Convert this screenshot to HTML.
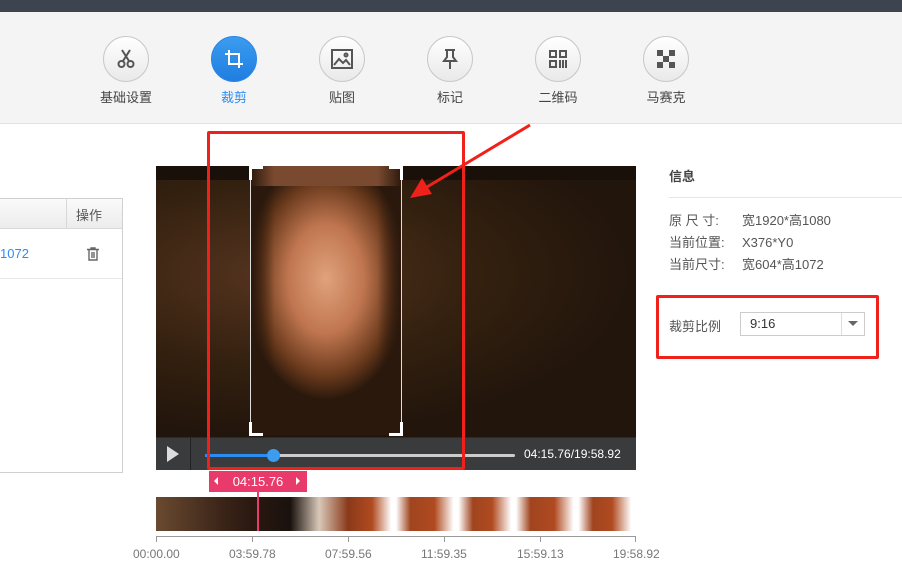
<!DOCTYPE html>
<html><head><meta charset="utf-8"><style>
*{margin:0;padding:0;box-sizing:border-box}
body{width:902px;height:566px;background:#fff;font-family:"Liberation Sans","Noto Sans CJK SC",sans-serif;position:relative;overflow:hidden;font-size:13px;color:#333}
.a{position:absolute}
.top{left:0;top:0;width:902px;height:12px;background:#3e4350}
.bar{left:0;top:12px;width:902px;height:112px;background:#f4f4f4;border-bottom:1px solid #e2e2e2}
.ic{position:absolute;top:36px;width:46px;height:46px;border-radius:50%;background:linear-gradient(#fff,#e9e9e9);border:1px solid #c9c9c9;display:flex;align-items:center;justify-content:center}
.lb{position:absolute;top:87px;width:80px;text-align:center;font-size:13px;color:#444}
</style></head><body>
<div class="a top"></div>
<div class="a bar"></div>
<div class="ic" style="left:103px"><svg width="22" height="22" viewBox="0 0 22 22" fill="none" stroke="#555" stroke-width="2"><path d="M7 2l7 11M15 2L8 13"/><circle cx="6.5" cy="16" r="3"/><circle cx="15.5" cy="16" r="3"/></svg></div>
<div class="lb" style="left:86px">基础设置</div>
<div class="ic" style="left:211px;background:linear-gradient(#3b9cf0,#1f7ee0);border-color:#2a86e6"><svg width="22" height="22" viewBox="0 0 22 22" fill="none" stroke="#fff" stroke-width="2"><path d="M6 2v14h14M2 6h14v14"/></svg></div>
<div class="lb" style="left:194px;color:#2d8cf0">裁剪</div>
<div class="ic" style="left:319px"><svg width="22" height="20" viewBox="0 0 22 20" fill="none" stroke="#555" stroke-width="2"><rect x="1" y="1" width="20" height="18"/><path d="M3 16l5-6 4 4 3-3 4 5" /><circle cx="15" cy="6" r="1.5"/></svg></div>
<div class="lb" style="left:302px">贴图</div>
<div class="ic" style="left:427px"><svg width="20" height="22" viewBox="0 0 20 22" fill="none" stroke="#555" stroke-width="2"><path d="M5 2h10M7 2v7l-3 4h12l-3-4V2M10 13v8"/></svg></div>
<div class="lb" style="left:410px">标记</div>
<div class="ic" style="left:535px"><svg width="20" height="20" viewBox="0 0 20 20" fill="#555"><path d="M1 1h8v8H1zM3 3v4h4V3zM11 1h8v8h-8zM13 3v4h4V3zM1 11h8v8H1zM3 13v4h4v-4zM11 11h2v8h-2zM14 11h2v8h-2zM17 11h2v8h-2z"/></svg></div>
<div class="lb" style="left:518px">二维码</div>
<div class="ic" style="left:643px"><svg width="20" height="20" viewBox="0 0 20 20" fill="#555"><rect x="1" y="1" width="6" height="6"/><rect x="13" y="1" width="6" height="6"/><rect x="7" y="7" width="6" height="6"/><rect x="1" y="13" width="6" height="6"/><rect x="13" y="13" width="6" height="6"/></svg></div>
<div class="lb" style="left:626px">马赛克</div>

<div class="a" style="left:-1px;top:198px;width:124px;height:275px;border:1px solid #d0d0d0"></div>
<div class="a" style="left:0;top:199px;width:122px;height:30px;background:linear-gradient(#fafafa,#ececec);border-bottom:1px solid #d8d8d8"></div>
<div class="a" style="left:66px;top:199px;width:1px;height:30px;background:#d8d8d8"></div>
<div class="a" style="left:76px;top:205px;font-size:13px;color:#555">操作</div>
<div class="a" style="left:0;top:246px;font-size:13px;color:#2d8cf0">1072</div>
<svg class="a" style="left:87px;top:247px" width="12" height="14" viewBox="0 0 12 14" fill="none" stroke="#666" stroke-width="1.4"><path d="M0 2.5h12M4 2.5V1h4v1.5M2 3v10h8V3M5 5v6M7 5v6"/></svg>
<div class="a" style="left:0;top:278px;width:122px;height:1px;background:#e6e6e6"></div>

<div class="a" style="left:156px;top:166px;width:480px;height:271px;background:radial-gradient(ellipse at 25% 40%,#55341f 0,#33200f 40%,#22150c 70%);"></div>
<div class="a" style="left:156px;top:166px;width:480px;height:14px;background:#1a100a"></div>
<div class="a" style="left:250px;top:166px;width:152px;height:269px;background:radial-gradient(ellipse 55% 45% at 50% 42%,#e0a27c 0,#c07650 45%,#6a3a1c 80%,#2a180c 100%);"></div>
<div class="a" style="left:250px;top:166px;width:152px;height:20px;background:#7a4a30"></div>
<div class="a" style="left:250px;top:166px;width:152px;height:269px;background:linear-gradient(90deg,#2a180c 0,rgba(0,0,0,0) 16%,rgba(0,0,0,0) 84%,#2a180c 100%)"></div>
<div class="a" style="left:250px;top:166px;width:1px;height:269px;background:#ddd"></div>
<div class="a" style="left:401px;top:166px;width:1px;height:269px;background:#ddd"></div>
<div class="a" style="left:249px;top:166px;width:14px;height:14px;border-left:3px solid #fff;border-top:3px solid #fff"></div>
<div class="a" style="left:389px;top:166px;width:14px;height:14px;border-right:3px solid #fff;border-top:3px solid #fff"></div>
<div class="a" style="left:249px;top:422px;width:14px;height:14px;border-left:3px solid #fff;border-bottom:3px solid #fff"></div>
<div class="a" style="left:389px;top:422px;width:14px;height:14px;border-right:3px solid #fff;border-bottom:3px solid #fff"></div>
<div class="a" style="left:156px;top:437px;width:480px;height:33px;background:#3a3b3d;border-top:1px solid #2a2a2a"></div>
<div class="a" style="left:190px;top:438px;width:1px;height:32px;background:#222"></div>
<svg class="a" style="left:167px;top:446px" width="12" height="16"><path d="M0 0L12 8L0 16Z" fill="#ddd"/></svg>
<div class="a" style="left:205px;top:454px;width:310px;height:3px;background:#ccc;border-radius:2px"></div>
<div class="a" style="left:205px;top:454px;width:68px;height:3px;background:#2d8cf0"></div>
<div class="a" style="left:267px;top:449px;width:13px;height:13px;border-radius:50%;background:#3b9cf0"></div>
<div class="a" style="left:524px;top:447px;color:#fff;font-size:12px">04:15.76/19:58.92</div>

<div class="a" style="left:209px;top:471px;width:98px;height:21px;background:#e83a6b;color:#fff;font-size:13px;line-height:21px;text-align:center">04:15.76</div>
<div class="a" style="left:214px;top:477px;width:0;height:0;border-right:4px solid #fff;border-top:4px solid transparent;border-bottom:4px solid transparent"></div>
<div class="a" style="left:296px;top:477px;width:0;height:0;border-left:4px solid #fff;border-top:4px solid transparent;border-bottom:4px solid transparent"></div>
<div class="a" style="left:156px;top:497px;width:480px;height:34px;background:linear-gradient(90deg,#6a4a30 0,#3a2418 14%,#2a1810 20%,#1a120e 28%,#d8c8b8 34%,#8a3a1a 40%,#b04a20 45%,#fff 49%,#fff 50%,#a04520 53%,#b04a20 58%,#fff 62%,#fff 63%,#a04520 66%,#b04a20 70%,#fff 74%,#fff 75%,#a04520 78%,#b04a20 83%,#fff 87%,#fff 88%,#a04520 91%,#b04a20 95%,#fff 99%)"></div>
<div class="a" style="left:257px;top:492px;width:2px;height:39px;background:#e83a6b"></div>
<div class="a" style="left:156px;top:536px;width:480px;height:1px;background:#999"></div>
<div class="a" style="left:156px;top:536px;width:1px;height:6px;background:#999"></div>
<div class="a" style="left:252px;top:536px;width:1px;height:6px;background:#999"></div>
<div class="a" style="left:348px;top:536px;width:1px;height:6px;background:#999"></div>
<div class="a" style="left:444px;top:536px;width:1px;height:6px;background:#999"></div>
<div class="a" style="left:540px;top:536px;width:1px;height:6px;background:#999"></div>
<div class="a" style="left:635px;top:536px;width:1px;height:6px;background:#999"></div>
<div class="a" style="left:133px;top:547px;color:#777;font-size:12px">00:00.00</div>
<div class="a" style="left:229px;top:547px;color:#777;font-size:12px">03:59.78</div>
<div class="a" style="left:325px;top:547px;color:#777;font-size:12px">07:59.56</div>
<div class="a" style="left:421px;top:547px;color:#777;font-size:12px">11:59.35</div>
<div class="a" style="left:517px;top:547px;color:#777;font-size:12px">15:59.13</div>
<div class="a" style="left:613px;top:547px;color:#777;font-size:12px">19:58.92</div>

<div class="a" style="left:669px;top:166px;font-size:13px;font-weight:bold;color:#444">信息</div>
<div class="a" style="left:669px;top:197px;width:233px;height:1px;background:#e5e5e5"></div>
<div class="a" style="left:669px;top:210px;color:#555;line-height:22px">原 尺 寸:<br>当前位置:<br>当前尺寸:</div>
<div class="a" style="left:742px;top:210px;color:#555;line-height:22px">宽1920*高1080<br>X376*Y0<br>宽604*高1072</div>
<div class="a" style="left:669px;top:316px;color:#555">裁剪比例</div>
<div class="a" style="left:740px;top:312px;width:125px;height:24px;border:1px solid #ccc;background:#fff"></div>
<div class="a" style="left:750px;top:316px;color:#333">9:16</div>
<div class="a" style="left:841px;top:313px;width:1px;height:22px;background:#ddd"></div>
<div class="a" style="left:848px;top:321px;width:0;height:0;border-top:5px solid #666;border-left:5px solid transparent;border-right:5px solid transparent"></div>

<div class="a" style="left:207px;top:131px;width:258px;height:339px;border:3px solid #f0201a;border-radius:2px"></div>
<div class="a" style="left:656px;top:295px;width:223px;height:64px;border:3px solid #f0201a;border-radius:2px"></div>
<svg class="a" style="left:400px;top:120px" width="140" height="90"><line x1="130" y1="5" x2="22" y2="70" stroke="#f0201a" stroke-width="3"/><path d="M10 78L22 58L32 74Z" fill="#f0201a"/></svg>
</body></html>
